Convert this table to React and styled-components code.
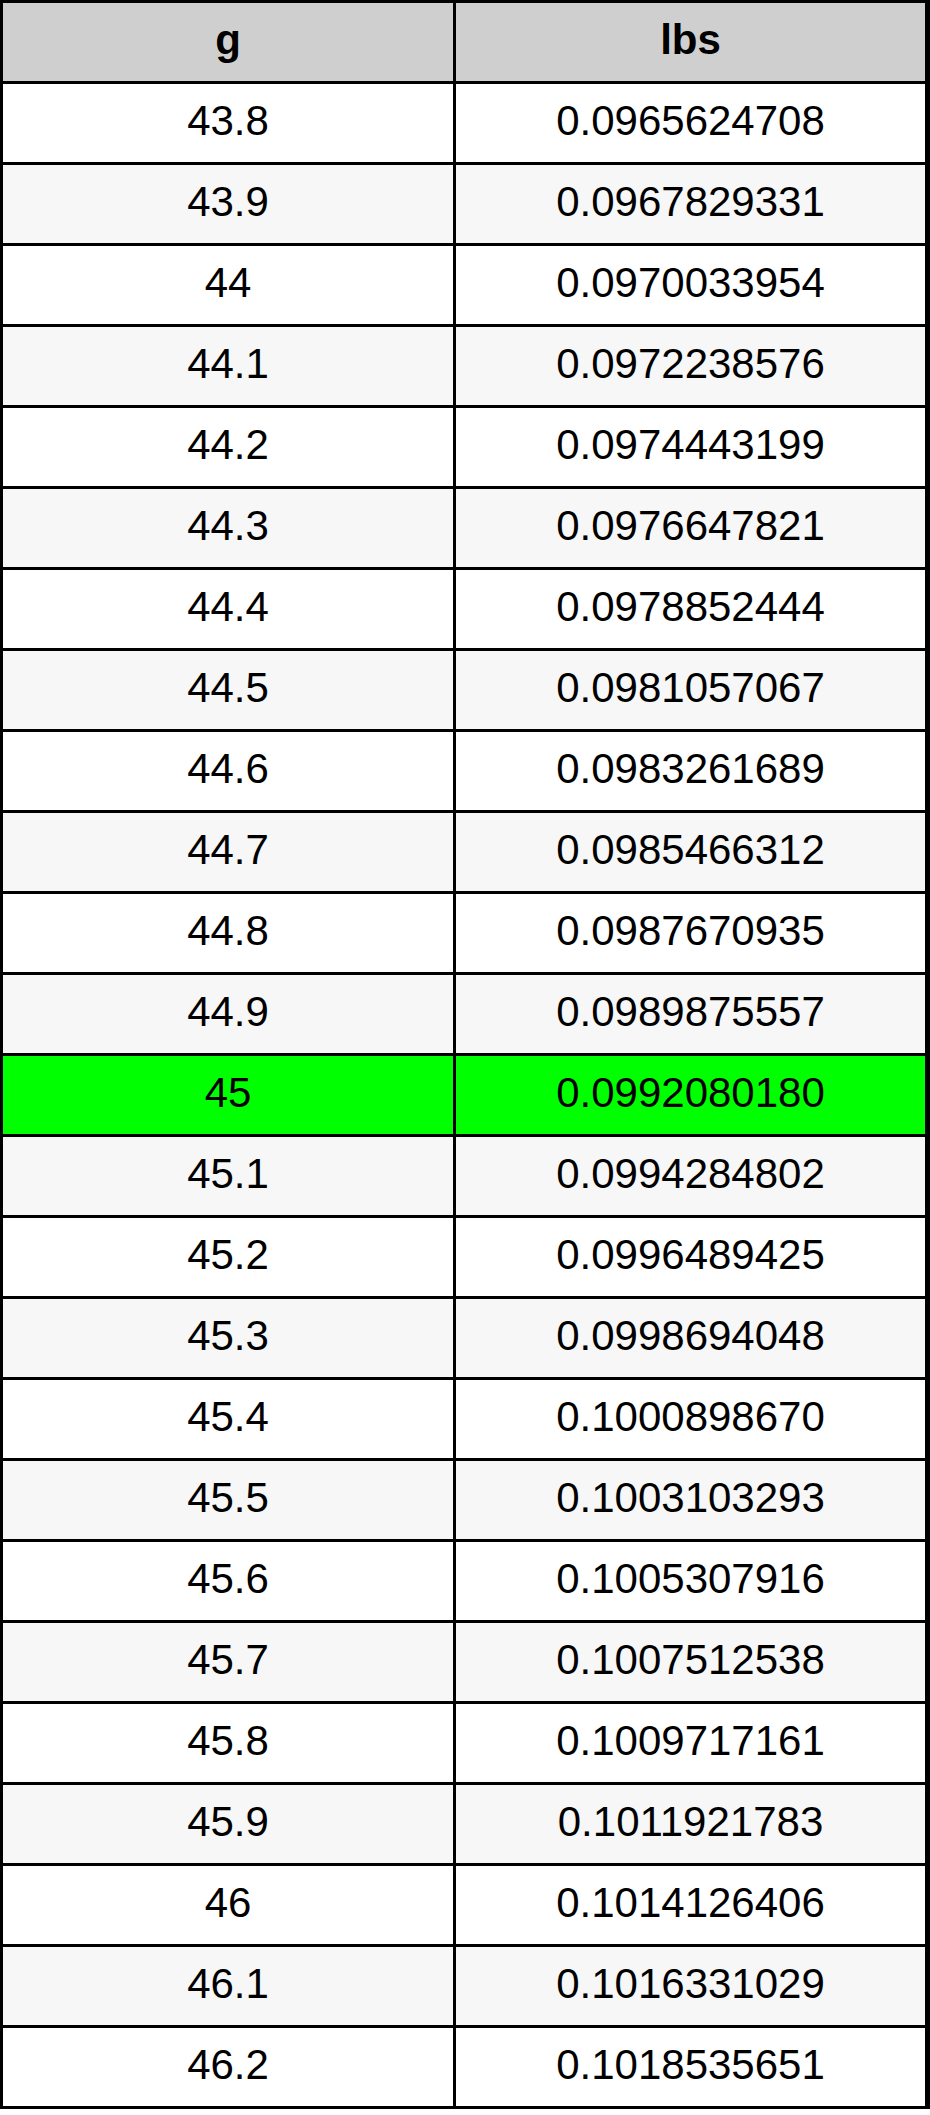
import styled, { createGlobalStyle } from 'styled-components';

const GlobalStyle = createGlobalStyle`
  html, body {
    margin: 0;
    padding: 0;
    background: #fff;
  }
  body {
    font-family: "Liberation Sans", Arial, sans-serif;
  }
`;

const Table = styled.div`
  display: grid;
  grid-template-columns: 450px 469px;
  gap: 3px;
  width: 925px;
  padding: 3px;
  background-color: #000;
`;

const bgFor = (variant) => {
  if (variant === 'head') return '#cfcfcf';
  if (variant === 'hit') return '#00ff00';
  if (variant === 'odd') return '#f7f7f7';
  return '#ffffff';
};

const Cell = styled.div`
  height: 78px;
  box-sizing: border-box;
  padding-bottom: 5px;
  display: flex;
  align-items: center;
  justify-content: center;
  font-size: 42px;
  font-weight: ${(props) => (props.variant === 'head' ? 700 : 400)};
  color: #000;
  background-color: ${(props) => bgFor(props.variant)};
`;

const rows = [
  ['43.8', '0.0965624708'],
  ['43.9', '0.0967829331'],
  ['44', '0.0970033954'],
  ['44.1', '0.0972238576'],
  ['44.2', '0.0974443199'],
  ['44.3', '0.0976647821'],
  ['44.4', '0.0978852444'],
  ['44.5', '0.0981057067'],
  ['44.6', '0.0983261689'],
  ['44.7', '0.0985466312'],
  ['44.8', '0.0987670935'],
  ['44.9', '0.0989875557'],
  ['45', '0.0992080180'],
  ['45.1', '0.0994284802'],
  ['45.2', '0.0996489425'],
  ['45.3', '0.0998694048'],
  ['45.4', '0.1000898670'],
  ['45.5', '0.1003103293'],
  ['45.6', '0.1005307916'],
  ['45.7', '0.1007512538'],
  ['45.8', '0.1009717161'],
  ['45.9', '0.1011921783'],
  ['46', '0.1014126406'],
  ['46.1', '0.1016331029'],
  ['46.2', '0.1018535651'],
];

export default function App() {
  return (
    <>
      <GlobalStyle />
      <Table>
        <Cell variant="head">g</Cell>
        <Cell variant="head">lbs</Cell>
        {rows.map(([g, lbs], index) => {
          const variant = g === '45' ? 'hit' : index % 2 ? 'odd' : 'even';
          return [
            <Cell key={g + '-g'} variant={variant}>{g}</Cell>,
            <Cell key={g + '-lbs'} variant={variant}>{lbs}</Cell>,
          ];
        })}
      </Table>
    </>
  );
}
